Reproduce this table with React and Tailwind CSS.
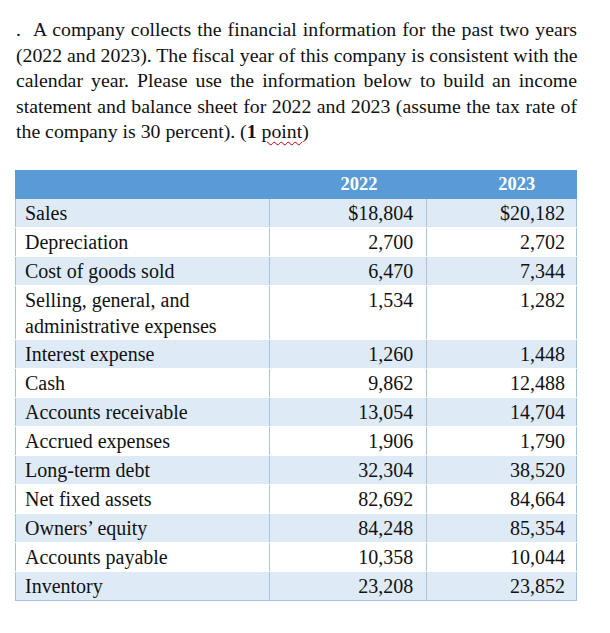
const rows = [
  { label: 'Sales', a: '$18,804', b: '$20,182' },
  { label: 'Depreciation', a: '2,700', b: '2,702' },
  { label: 'Cost of goods sold', a: '6,470', b: '7,344' },
  { label: 'Selling, general, and administrative expenses', a: '1,534', b: '1,282', tall: true },
  { label: 'Interest expense', a: '1,260', b: '1,448' },
  { label: 'Cash', a: '9,862', b: '12,488' },
  { label: 'Accounts receivable', a: '13,054', b: '14,704' },
  { label: 'Accrued expenses', a: '1,906', b: '1,790' },
  { label: 'Long-term debt', a: '32,304', b: '38,520' },
  { label: 'Net fixed assets', a: '82,692', b: '84,664' },
  { label: 'Owners\u2019 equity', a: '84,248', b: '85,354' },
  { label: 'Accounts payable', a: '10,358', b: '10,044' },
  { label: 'Inventory', a: '23,208', b: '23,852' },
];

const lines = [
  '.\u00a0\u00a0A company collects the financial information for the past two years',
  '(2022 and 2023). The fiscal year of this company is consistent with the',
  'calendar year. Please use the information below to build an income',
  'statement and balance sheet for 2022 and 2023 (assume the tax rate of',
];

export default function App() {
  return (
    <div className="w-[610px] h-[633px] bg-white text-[#111] font-['Liberation_Serif','Times_New_Roman',serif]">
      <div className="pl-4 pr-[33px] pt-[17px] text-[19.8px] leading-[25.5px] whitespace-nowrap">
        {lines.map((l) => (
          <p key={l} className="text-justify [text-align-last:justify]">{l}</p>
        ))}
        <p>
          the company is 30 percent). (<b>1</b>{' '}
          <span className="underline decoration-wavy decoration-[#c00000] decoration-1 underline-offset-[3px]">point</span>)
        </p>
      </div>

      <table className="ml-[15px] mt-[25px] w-[562px] border-collapse text-[20px] leading-[26px]">
        <thead>
          <tr className="h-[28px] bg-[#5b9bd5] text-white">
            <th className="w-[254px] border border-[#5b9bd5]"></th>
            <th className="w-[158px] border border-[#5b9bd5] pl-[22px] text-[18.5px] font-bold">2022</th>
            <th className="w-[150px] border border-[#5b9bd5] pl-[30px] text-[18.5px] font-bold">2023</th>
          </tr>
        </thead>
        <tbody>
          {rows.map((r, i) => {
            const last = i === rows.length - 1;
            const y = last ? 'border-t border-t-white border-b border-b-[#9dc3e6] ' : 'border-y border-y-white ';
            const pad = r.tall ? 'pt-[1px]' : '';
            return (
              <tr
                key={r.label}
                className={(i % 2 === 0 ? 'bg-[#deeaf6] ' : 'bg-white ') + (r.tall ? 'h-[54px] align-top' : 'h-[29px]')}
              >
                <td className={y + 'border-l border-l-[#9dc3e6] border-r border-r-[#a9c4de] pl-[9px] ' + pad}>
                  {r.tall ? (
                    <>
                      Selling, general, and
                      <br />
                      administrative expenses
                    </>
                  ) : (
                    r.label
                  )}
                </td>
                <td className={y + 'border-r border-r-[#a9c4de] text-right pr-[13px] ' + pad}>{r.a}</td>
                <td className={y + 'border-r border-r-[#9dc3e6] text-right pr-[11px] ' + pad}>{r.b}</td>
              </tr>
            );
          })}
        </tbody>
      </table>
    </div>
  );
}
